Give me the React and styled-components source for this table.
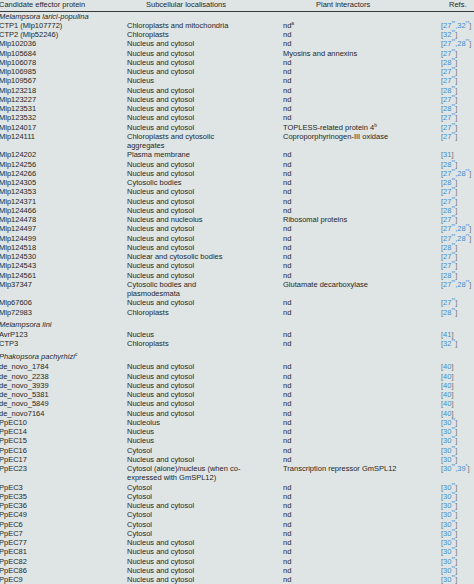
import React from "react";
import styled, { createGlobalStyle } from "styled-components";

const Global = createGlobalStyle`
  html, body { margin: 0; padding: 0; background: #dfe4e4; }
  body { width: 474px; height: 584px; overflow: hidden; }
  #root { width: 474px; height: 584px; overflow: hidden; }
`;

const Table = styled.div`
  width: 490px;
  margin-left: -1px;
  font-family: "Liberation Sans", Arial, Helvetica, sans-serif;
  font-size: 7.5px;
  color: #262828;
  background: #dfe4e4;
`;

const cols = "128px 156px 158px 48px";

const HeadRow = styled.div`
  display: grid;
  grid-template-columns: ${cols};
  line-height: 9px;
  padding-bottom: 1.5px;
  border-bottom: 1px solid #3a3c3c;
`;

const HeadCell = styled.div`
  padding-left: ${(p) => p.$indent || 0}px;
  white-space: nowrap;
`;

const Section = styled.div`
  font-style: italic;
  line-height: 9.25px;
  margin-top: ${(p) => p.$gap || 0}px;
  margin-bottom: ${(p) => p.$after || 0}px;
  white-space: nowrap;
`;

const Row = styled.div`
  display: grid;
  grid-template-columns: ${cols};
  line-height: 9.25px;
`;

const Cell = styled.div`
  white-space: pre-line;
`;

const NoWrap = styled.div`
  white-space: nowrap;
`;

const Sup = styled.sup`
  font-size: 4.8px;
  line-height: 0;
  vertical-align: 2.6px;
`;

const Bracket = styled.span`
  color: #6a7478;
`;

const RefNum = styled.span`
  color: #3b8fd3;
`;

const NC = "Nucleus and cytosol";

const sections = [
  {
    name: "Melampsora larici-populina",
    rows: [
      ["CTP1 (Mlp107772)", "Chloroplasts and mitochondria", "nd^a", "27**,32**"],
      ["CTP2 (Mlp52246)", "Chloroplasts", "nd", "32**"],
      ["Mlp102036", NC, "nd", "27**,28**"],
      ["Mlp105684", NC, "Myosins and annexins", "27**"],
      ["Mlp106078", NC, "nd", "28**"],
      ["Mlp106985", NC, "nd", "27**"],
      ["Mlp109567", "Nucleus", "nd", "27**"],
      ["Mlp123218", NC, "nd", "28**"],
      ["Mlp123227", NC, "nd", "27**"],
      ["Mlp123531", NC, "nd", "28**"],
      ["Mlp123532", NC, "nd", "27**"],
      ["Mlp124017", NC, "TOPLESS-related protein 4^b", "27**"],
      ["Mlp124111", "Chloroplasts and cytosolic\naggregates", "Coproporphyrinogen-III oxidase", "27**"],
      ["Mlp124202", "Plasma membrane", "nd", "31"],
      ["Mlp124256", NC, "nd", "28**"],
      ["Mlp124266", NC, "nd", "27**,28**"],
      ["Mlp124305", "Cytosolic bodies", "nd", "28**"],
      ["Mlp124353", NC, "nd", "27**"],
      ["Mlp124371", NC, "nd", "27**"],
      ["Mlp124466", NC, "nd", "28**"],
      ["Mlp124478", "Nucleus and nucleolus", "Ribosomal proteins", "27**"],
      ["Mlp124497", NC, "nd", "27**,28**"],
      ["Mlp124499", NC, "nd", "27**,28**"],
      ["Mlp124518", NC, "nd", "28**"],
      ["Mlp124530", "Nuclear and cytosolic bodies", "nd", "27**"],
      ["Mlp124543", NC, "nd", "27**"],
      ["Mlp124561", NC, "nd", "28**"],
      ["Mlp37347", "Cytosolic bodies and\nplasmodesmata", "Glutamate decarboxylase", "27**,28**"],
      ["Mlp67606", NC, "nd", "27**"],
      ["Mlp72983", "Chloroplasts", "nd", "28**"],
    ],
  },
  {
    name: "Melampsora lini",
    gap: 3.5,
    rows: [
      ["AvrP123", "Nucleus", "nd", "41"],
      ["CTP3", "Chloroplasts", "nd", "32**"],
    ],
  },
  {
    name: "Phakopsora pachyrhizi^c",
    gap: 3.5,
    after: 1.5,
    rows: [
      ["de_novo_1784", NC, "nd", "40"],
      ["de_novo_2238", NC, "nd", "40"],
      ["de_novo_3939", NC, "nd", "40"],
      ["de_novo_5381", NC, "nd", "40"],
      ["de_novo_5849", NC, "nd", "40"],
      ["de_novo7164", NC, "nd", "40"],
      ["PpEC10", "Nucleolus", "nd", "30**"],
      ["PpEC14", "Nucleus", "nd", "30**"],
      ["PpEC15", "Nucleus", "nd", "30**"],
      ["PpEC16", "Cytosol", "nd", "30**"],
      ["PpEC17", NC, "nd", "30**"],
      ["PpEC23", "Cytosol (alone)/nucleus (when co-\nexpressed with GmSPL12)", "Transcription repressor GmSPL12", "30**,39*"],
      ["PpEC3", "Cytosol", "nd", "30**"],
      ["PpEC35", "Cytosol", "nd", "30**"],
      ["PpEC36", NC, "nd", "30**"],
      ["PpEC49", "Cytosol", "nd", "30**"],
      ["PpEC6", "Cytosol", "nd", "30**"],
      ["PpEC7", "Cytosol", "nd", "30**"],
      ["PpEC77", NC, "nd", "30**"],
      ["PpEC81", NC, "nd", "30**"],
      ["PpEC82", NC, "nd", "30**"],
      ["PpEC86", NC, "nd", "30**"],
      ["PpEC9", NC, "nd", "30**"],
    ],
  },
];

function withSup(text) {
  const i = text.indexOf("^");
  if (i < 0) return text;
  return (
    <>
      {text.slice(0, i)}
      <Sup>{text.slice(i + 1)}</Sup>
    </>
  );
}

function Refs({ value }) {
  const parts = value.split(",");
  return (
    <NoWrap>
      <Bracket>[</Bracket>
      {parts.map((p, i) => {
        const m = p.match(/^(\d+)(\**)$/);
        return (
          <React.Fragment key={i}>
            {i > 0 && <RefNum>,</RefNum>}
            <RefNum>{m[1]}</RefNum>
            {m[2] && (
              <Sup>
                <RefNum>{m[2]}</RefNum>
              </Sup>
            )}
          </React.Fragment>
        );
      })}
      <Bracket>]</Bracket>
    </NoWrap>
  );
}

export default function App() {
  return (
    <>
      <Global />
      <Table>
        <HeadRow>
          <HeadCell>Candidate effector protein</HeadCell>
          <HeadCell $indent={19}>Subcellular localisations</HeadCell>
          <HeadCell $indent={33}>Plant interactors</HeadCell>
          <HeadCell $indent={8}>Refs.</HeadCell>
        </HeadRow>
        {sections.map((s) => (
          <React.Fragment key={s.name}>
            <Section $gap={s.gap} $after={s.after}>
              {withSup(s.name)}
            </Section>
            {s.rows.map((r) => (
              <Row key={r[0]}>
                <NoWrap>{r[0]}</NoWrap>
                <Cell>{r[1]}</Cell>
                <NoWrap>{withSup(r[2])}</NoWrap>
                <Refs value={r[3]} />
              </Row>
            ))}
          </React.Fragment>
        ))}
      </Table>
    </>
  );
}
